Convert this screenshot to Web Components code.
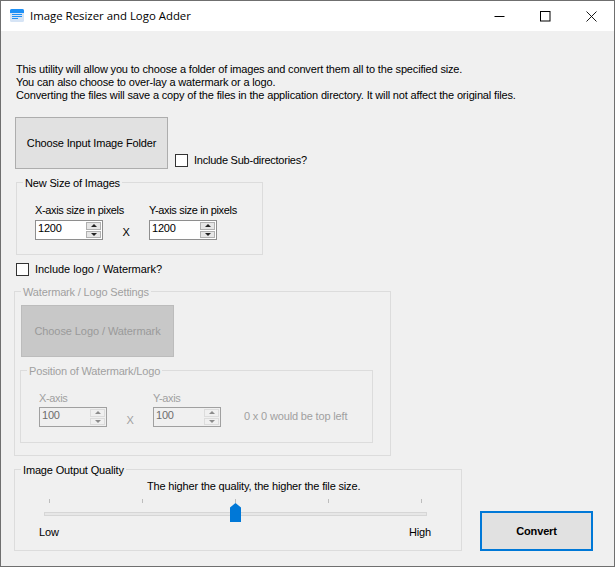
<!DOCTYPE html>
<html>
<head>
<meta charset="utf-8">
<title>Image Resizer and Logo Adder</title>
<style>
  html, body { margin: 0; padding: 0; background: #f0f0f0; }
  body { font: 11px/13px "Liberation Sans", Arial, sans-serif; letter-spacing: -0.16px; color: #000; }
</style>
</head>
<body>
<app-window caption="Image Resizer and Logo Adder">
  <resizer-form></resizer-form>
</app-window>

<script>
class AppWindow extends HTMLElement {
  constructor() {
    super();
    this.attachShadow({ mode: "open" });
  }

  connectedCallback() {
    const caption = this.getAttribute("caption") || "";
    this.shadowRoot.innerHTML = `
      <style>
        :host { display: block; box-sizing: border-box; width: 615px; height: 567px; border: 1px solid #6f6f6f; background: #f0f0f0; overflow: hidden; }
        .bar { display: flex; align-items: center; height: 30px; background: #fff; }
        .icon { display: block; margin: 0 6px 2px 9px; }
        .caption { flex: 1; font: 11.4px/16px "Open Sans", sans-serif; letter-spacing: 0; margin-bottom: 1px; }
        .ctl { width: 46px; height: 30px; display: flex; align-items: center; justify-content: center; }
        svg { display: block; }
      </style>
      <div class="bar">
        <svg class="icon" width="14" height="13" viewBox="0 0 14 13">
          <rect x="0" y="0" width="14" height="13" rx="1.5" fill="#d6e4f5"/>
          <path d="M0 4V1.5A1.5 1.5 0 0 1 1.5 0h11A1.5 1.5 0 0 1 14 1.5V4z" fill="#1e90f5"/>
          <path d="M2 5.5h10M2 7.5h10M2 9.5h6" stroke="#1e90f5" stroke-width="1"/>
        </svg>
        <div class="caption">${caption}</div>
        <div class="ctl"><svg width="11" height="11"><path d="M0.5 5.5h10" stroke="#000"/></svg></div>
        <div class="ctl"><svg width="11" height="11"><rect x="0.5" y="0.5" width="9.5" height="9.5" fill="none" stroke="#000"/></svg></div>
        <div class="ctl"><svg width="11" height="11"><path d="M0.5 0.5l10 10M10.5 0.5l-10 10" stroke="#000" stroke-width="0.9"/></svg></div>
      </div>
      <slot></slot>
    `;
  }
}

class WinButton extends HTMLElement {
  constructor() {
    super();
    this.attachShadow({ mode: "open" });
  }

  connectedCallback() {
    this.shadowRoot.innerHTML = `
      <style>
        :host { display: flex; align-items: center; justify-content: center; box-sizing: border-box; border: 1px solid #adadad; background: #e1e1e1; }
        :host([disabled]) { background: #c8c8c8; border-color: #bcbcbc; color: #9a9a9a; }
        :host([default]) { border: 2px solid #0078d7; font-weight: bold; }
      </style>
      <slot></slot>
    `;
  }
}

class WinCheck extends HTMLElement {
  constructor() {
    super();
    this.attachShadow({ mode: "open" });
  }

  connectedCallback() {
    this.shadowRoot.innerHTML = `
      <style>
        :host { display: flex; align-items: center; gap: 6px; }
        .box { box-sizing: border-box; width: 13px; height: 13px; background: #fff; border: 1px solid #333; }
      </style>
      <div class="box"></div>
      <slot></slot>
    `;
  }
}

class WinGroup extends HTMLElement {
  constructor() {
    super();
    this.attachShadow({ mode: "open" });
  }

  connectedCallback() {
    // --pad goes on the body, the legend has to stay on the border line
    this.shadowRoot.innerHTML = `
      <style>
        :host { display: block; box-sizing: border-box; border: 1px solid #dcdcdc; }
        :host([disabled]) { color: #a0a0a0; }
        .legend { width: fit-content; margin: -7px 0 0 6px; padding: 0 2px; line-height: 14px; background: #f0f0f0; }
        .body { padding: var(--pad, 0); }
      </style>
      <div class="legend">${this.getAttribute("legend") || ""}</div>
      <div class="body"><slot></slot></div>
    `;
  }
}

class WinSpin extends HTMLElement {
  constructor() {
    super();
    this.attachShadow({ mode: "open" });
  }

  connectedCallback() {
    this.shadowRoot.innerHTML = `
      <style>
        :host { display: flex; box-sizing: border-box; width: 68px; height: 20px; border: 1px solid #8e8e8e; background: #fff; padding: 1px; letter-spacing: -0.2px; }
        :host([disabled]) { background: #f0f0f0; border-color: #a0a0a0; color: #6d6d6d; }
        .value { flex: 1; padding-left: 1px; line-height: 12px; }
        .btns { display: flex; flex-direction: column; gap: 1px; width: 15px; }
        .btn { flex: 1; display: flex; align-items: center; justify-content: center; background: #e6e6e6; border: 1px solid #b0b0b0; box-sizing: border-box; }
        :host([disabled]) .btn { background: #f0f0f0; border-color: #dcdcdc; }
        .up { width: 0; height: 0; border-left: 3px solid transparent; border-right: 3px solid transparent; border-bottom: 3px solid #222; }
        .down { width: 0; height: 0; border-left: 3px solid transparent; border-right: 3px solid transparent; border-top: 3px solid #222; }
        :host([disabled]) .up { border-bottom-color: #8c8c8c; }
        :host([disabled]) .down { border-top-color: #8c8c8c; }
      </style>
      <div class="value"><slot></slot></div>
      <div class="btns">
        <div class="btn"><div class="up"></div></div>
        <div class="btn"><div class="down"></div></div>
      </div>
    `;
  }
}

class WinSlider extends HTMLElement {
  constructor() {
    super();
    this.attachShadow({ mode: "open" });
  }

  connectedCallback() {
    const ticks = "<i></i>".repeat(5);
    this.shadowRoot.innerHTML = `
      <style>
        :host { display: block; position: relative; width: 383px; height: 24px; }
        .ticks { display: flex; justify-content: space-between; margin: 0 5px; height: 4px; }
        i { width: 1px; background: #bdbdbd; }
        .track { box-sizing: border-box; height: 4px; margin-top: 9px; background: #e7e7e7; border: 1px solid #d6d6d6; }
        svg { position: absolute; left: 186px; top: 4px; display: block; }
      </style>
      <div class="ticks">${ticks}</div>
      <div class="track"></div>
      <svg width="11" height="19"><path d="M5.5 0L11 4.5V19H0V4.5z" fill="#0078d7"/></svg>
    `;
  }
}

// the two size pickers share one layout, only labels and values change
class AxisPair extends HTMLElement {
  constructor() {
    super();
    this.attachShadow({ mode: "open" });
  }

  connectedCallback() {
    const off = this.hasAttribute("disabled") ? "disabled" : "";
    const val = this.getAttribute("value");
    this.shadowRoot.innerHTML = `
      <style>
        :host { display: flex; align-items: flex-start; }
        .col { display: flex; flex-direction: column; width: 68px; white-space: nowrap; }
        .lbl { height: ${off ? 15 : 16}px; line-height: 13px; letter-spacing: -0.34px; }
        .x { width: 46px; text-align: center; margin-top: 22px; }
      </style>
      <div class="col"><div class="lbl">${this.getAttribute("xlabel")}</div><win-spin ${off}>${val}</win-spin></div>
      <div class="x">X</div>
      <div class="col"><div class="lbl">${this.getAttribute("ylabel")}</div><win-spin ${off}>${val}</win-spin></div>
    `;
  }
}

class ResizerForm extends HTMLElement {
  constructor() {
    super();
    this.attachShadow({ mode: "open" });
  }

  connectedCallback() {
    this.shadowRoot.innerHTML = `
      <style>
        :host { display: block; }
        .intro { margin: 32px 0 0 15px; white-space: nowrap; }
        .row { display: flex; align-items: flex-end; margin-top: 15px; }
        .folder { width: 153px; height: 52px; margin-left: 14px; }
        .sub { margin: 0 0 2px 7px; letter-spacing: -0.24px; }
        .size { width: 247px; height: 73px; margin: 13px 0 0 15px; --pad: 14px 0 0 18px; }
        .logo-check { margin: 8px 0 0 15px; letter-spacing: -0.04px; }
        .settings { width: 377px; height: 165px; margin: 15px 0 0 13px; --pad: 6px 0 0 6px; }
        .logo-btn { width: 153px; height: 52px; letter-spacing: -0.08px; }
        .position { width: 353px; height: 73px; margin: 13px 0 0 -1px; --pad: 14px 0 0 18px; }
        .pos-row { display: flex; align-items: flex-start; }
        .hint { margin: 18px 0 0 23px; white-space: nowrap; }
        .bottom { display: flex; align-items: flex-end; gap: 18px; margin: 13px 0 0 13px; }
        .quality { width: 448px; height: 82px; }
        .note { margin: 2px 0 0 132px; line-height: 14px; }
        .slider { margin: 6px 0 0 29px; }
        .ends { display: flex; justify-content: space-between; margin: 3px 30px 0 24px; }
        .convert { width: 113px; height: 40px; }
      </style>
      <div class="intro">This utility will allow you to choose a folder of images and convert them all to the specified size.<br>You can also choose to over-lay a watermark or a logo.<br>Converting the files will save a copy of the files in the application directory. It will not affect the original files.</div>
      <div class="row">
        <win-button class="folder">Choose Input Image Folder</win-button>
        <win-check class="sub">Include Sub-directories?</win-check>
      </div>
      <win-group class="size" legend="New Size of Images">
        <axis-pair xlabel="X-axis size in pixels" ylabel="Y-axis size in pixels" value="1200"></axis-pair>
      </win-group>
      <win-check class="logo-check">Include logo / Watermark?</win-check>
      <win-group class="settings" legend="Watermark / Logo Settings" disabled>
        <win-button class="logo-btn" disabled>Choose Logo / Watermark</win-button>
        <win-group class="position" legend="Position of Watermark/Logo" disabled>
          <div class="pos-row">
            <axis-pair xlabel="X-axis" ylabel="Y-axis" value="100" disabled></axis-pair>
            <div class="hint">0 x 0 would be top left</div>
          </div>
        </win-group>
      </win-group>
      <div class="bottom">
        <win-group class="quality" legend="Image Output Quality">
          <div class="note">The higher the quality, the higher the file size.</div>
          <win-slider class="slider"></win-slider>
          <div class="ends"><span>Low</span><span>High</span></div>
        </win-group>
        <win-button class="convert" default>Convert</win-button>
      </div>
    `;
  }
}

customElements.define("app-window", AppWindow);
customElements.define("win-button", WinButton);
customElements.define("win-check", WinCheck);
customElements.define("win-group", WinGroup);
customElements.define("win-spin", WinSpin);
customElements.define("win-slider", WinSlider);
customElements.define("axis-pair", AxisPair);
customElements.define("resizer-form", ResizerForm);
</script>
</body>
</html>
